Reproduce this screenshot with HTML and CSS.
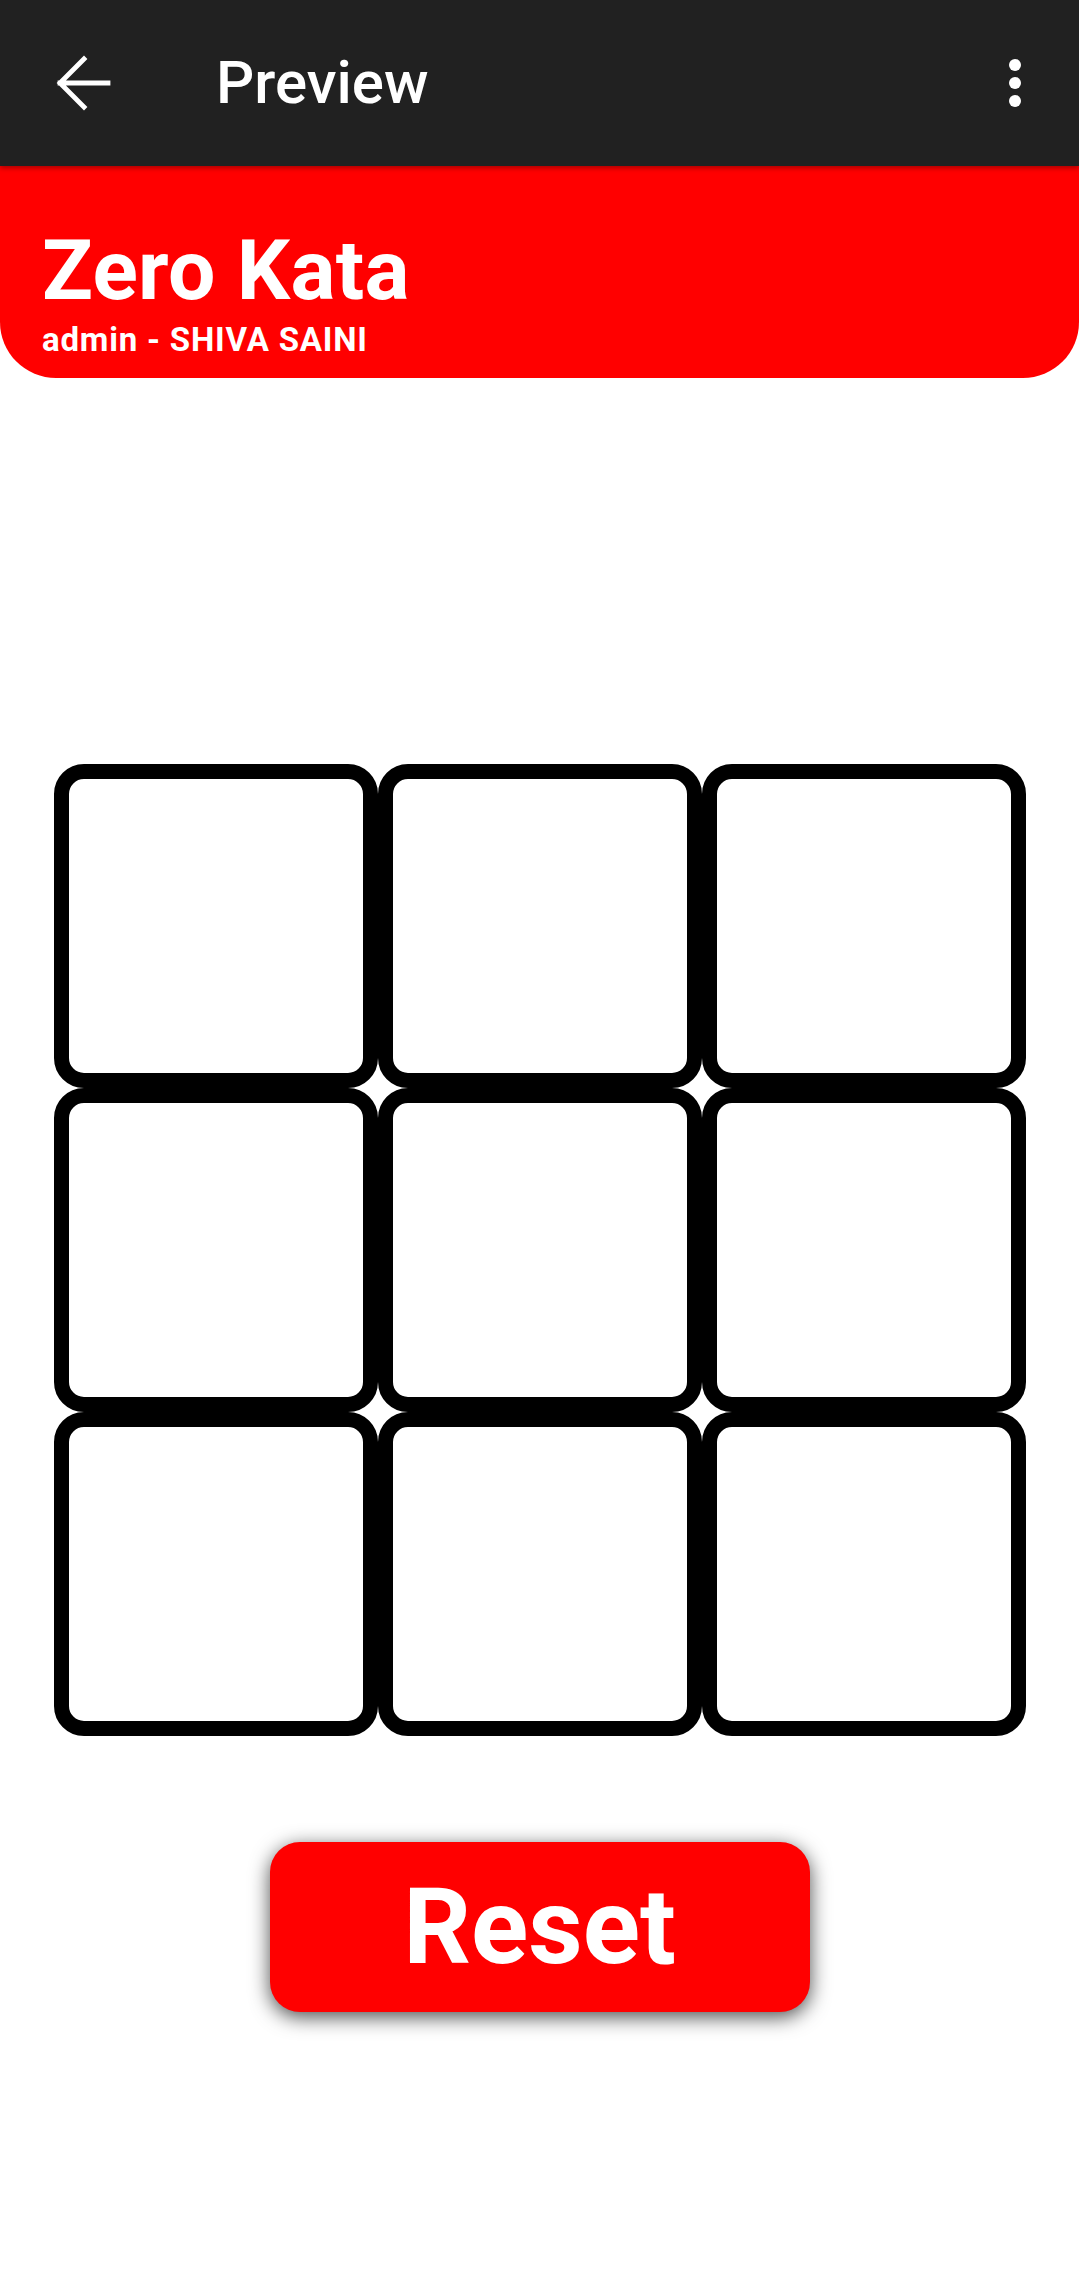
FILE: index.html
```html
<!DOCTYPE html>
<html lang="en">
<head>
<meta charset="utf-8">
<title>Zero Kata</title>
<link rel="stylesheet" href="styles.css">
</head>
<body>
<header class="appbar">
  <svg class="back" viewBox="0 0 24 24" aria-hidden="true">
    <path d="M20 12H4M12 4l-8 8 8 8" fill="none" stroke="#fff" stroke-width="1.6" stroke-linecap="square" stroke-linejoin="miter"/>
  </svg>
  <h1 class="title">Preview</h1>
  <svg class="more" viewBox="0 0 24 24" aria-hidden="true">
    <circle cx="12" cy="6" r="2" fill="#fff"/>
    <circle cx="12" cy="12" r="2" fill="#fff"/>
    <circle cx="12" cy="18" r="2" fill="#fff"/>
  </svg>
</header>
<section class="banner">
  <div class="game-name">Zero Kata</div>
  <div class="author">admin - SHIVA SAINI</div>
</section>
<main class="board-area">
  <div class="board">
    <div class="cell"></div>
    <div class="cell"></div>
    <div class="cell"></div>
    <div class="cell"></div>
    <div class="cell"></div>
    <div class="cell"></div>
    <div class="cell"></div>
    <div class="cell"></div>
    <div class="cell"></div>
  </div>
  <button class="reset" type="button">Reset</button>
</main>
</body>
</html>
```
FILE: styles.css
```css
html, body {
  margin: 0;
  padding: 0;
  background: #ffffff;
}

body {
  font-family: Roboto, "Liberation Sans", sans-serif;
  width: 1079px;
  min-height: 2287px;
}

.appbar {
  position: relative;
  z-index: 2;
  height: 166px;
  background: #212121;
  display: flex;
  align-items: center;
  box-shadow: 0 2px 5px rgba(0, 0, 0, 0.35);
}

.back {
  width: 72px;
  height: 72px;
  margin-left: 48px;
  flex: none;
}

.title {
  margin: 0 0 0 96px;
  color: #ffffff;
  font-size: 60px;
  font-weight: 500;
  line-height: 1;
}

.more {
  width: 72px;
  height: 72px;
  margin-left: auto;
  margin-right: 28px;
  flex: none;
}

.banner {
  background: #ff0000;
  color: #ffffff;
  border-radius: 0 0 56px 56px;
  padding: 55px 42px 19px;
}

.game-name {
  font-size: 84px;
  font-weight: 700;
  line-height: normal;
  letter-spacing: 0.3px;
}

.author {
  font-size: 33px;
  font-weight: 700;
  line-height: normal;
  letter-spacing: 0.8px;
}

.board-area {
  display: flex;
  flex-direction: column;
  align-items: center;
}

.board {
  margin-top: 386px;
  display: grid;
  grid-template-columns: repeat(3, 324px);
  grid-auto-rows: 324px;
}

.cell {
  box-sizing: border-box;
  border: 15px solid #000000;
  border-radius: 30px;
  background: #ffffff;
}

.reset {
  margin-top: 106px;
  width: 540px;
  height: 170px;
  border: none;
  border-radius: 30px;
  background: #ff0000;
  color: #ffffff;
  font-family: Roboto, "Liberation Sans", sans-serif;
  font-size: 106px;
  font-weight: 700;
  line-height: 1;
  padding: 0;
  display: flex;
  align-items: center;
  justify-content: center;
  box-shadow: 0 5px 20px rgba(0, 0, 0, 0.7);
}
```
